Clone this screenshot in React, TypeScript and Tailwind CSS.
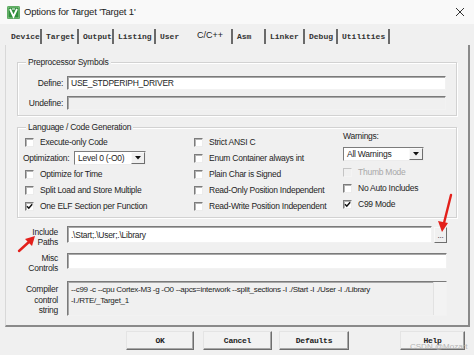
import React from 'react';

const TABS = [
  { t: 'Device', w: 35 },
  { t: 'Target', w: 37 },
  { t: 'Output', w: 35 },
  { t: 'Listing', w: 42 },
  { t: 'User', w: 32, noSep: true },
  { t: 'C/C++', w: 45, sel: true },
  { t: 'Asm', w: 33 },
  { t: 'Linker', w: 39 },
  { t: 'Debug', w: 33 },
  { t: 'Utilities', w: 52 },
];

const Check = ({ checked, disabled }: { checked?: boolean; disabled?: boolean }) => (
  <span
    className={
      disabled
        ? 'relative inline-block w-[9px] h-[9px] shrink-0 border border-t-[#c4c4c4] border-l-[#c4c4c4] border-r-[#f4f4f4] border-b-[#f4f4f4] bg-[#f0f0f0]'
        : 'relative inline-block w-[9px] h-[9px] shrink-0 border border-t-[#7c7c7c] border-l-[#7c7c7c] border-r-[#ececec] border-b-[#ececec] bg-white shadow-[inset_1px_1px_0_#b4b4b4]'
    }
  >
    {checked && (
      <svg className="absolute left-0 top-0" width="7" height="7" viewBox="0 0 7 7">
        <path d="M1 3.2 L2.8 5.2 L6.2 1.2" stroke="#111" strokeWidth="1.5" fill="none" />
      </svg>
    )}
  </span>
);

const CheckRow = ({ label, checked, disabled }: { label: string; checked?: boolean; disabled?: boolean }) => (
  <div className="flex items-center h-[16px] pl-[2px] gap-[6px]">
    <Check checked={checked} disabled={disabled} />
    <span className={disabled ? 'text-[#a8a8a8]' : ''}>{label}</span>
  </div>
);

const Select = ({ value, w }: { value: string; w: string }) => (
  <div className={`${w} h-[14px] flex items-stretch bg-white border border-t-[#7c7c7c] border-l-[#7c7c7c] border-r-[#ececec] border-b-[#ececec]`}>
    <span className="flex-1 pl-[3px] leading-[12px]">{value}</span>
    <div className="w-[14px] flex items-center justify-center bg-[#f0f0f0] border border-t-[#fafafa] border-l-[#fafafa] border-r-[#6e6e6e] border-b-[#6e6e6e]">
      <svg width="6" height="4" viewBox="0 0 6 4">
        <path d="M0 0 H6 L3 3.5 Z" fill="#111" />
      </svg>
    </div>
  </div>
);

const inputCls =
  'border border-t-[#7a7a7a] border-l-[#7a7a7a] border-r-[#f2f2f2] border-b-[#f2f2f2] shadow-[inset_1px_1px_0_#a8a8a8]';

const groupCls =
  'relative border border-[#d2d2d2] shadow-[inset_1px_1px_0_#ffffff,1px_1px_0_#ffffff]';

const Button = ({ label, cls }: { label: string; cls: string }) => (
  <div
    className={`${cls} h-[19px] flex items-center justify-center bg-[#f2f2f2] border border-t-[#e4e4e4] border-l-[#e4e4e4] border-r-[#6e6e6e] border-b-[#6e6e6e] shadow-[inset_-1px_-1px_0_#a8a8a8] font-['Liberation_Mono','Courier_New',monospace] font-bold text-[8px] text-[#222]`}
  >
    {label}
  </div>
);

export default function App() {
  return (
    <div className="relative w-[474px] h-[355px] overflow-hidden bg-[#f0f0f0] text-[#1e1e1e] font-['Liberation_Sans',Arial,sans-serif] text-[8.5px] tracking-[-0.25px] leading-[10px]">
      {/* Title bar */}
      <div className="h-[24px] flex items-center bg-[#f9f9f9] pl-[7px] pr-[9px]">
        <svg width="13" height="13" viewBox="0 0 13 13">
          <rect x="0" y="0" width="13" height="13" rx="1.5" fill="#2f8f3c" />
          <rect x="1" y="1" width="11" height="11" fill="none" stroke="#a8d8a0" strokeWidth="0.8" />
          <path d="M3 3 L6.5 10.5 L10 3" stroke="#fff" strokeWidth="1.8" fill="none" />
          <path d="M5 3 H8" stroke="#fff" strokeWidth="1" />
        </svg>
        <span className="ml-[4px] text-[9.5px] tracking-[-0.15px] text-[#222]">Options for Target 'Target 1'</span>
        <svg className="ml-auto" width="10" height="10" viewBox="0 0 10 10">
          <path d="M1 1 L9 9 M9 1 L1 9" stroke="#333" strokeWidth="1" />
        </svg>
      </div>

      {/* Tabs */}
      <div className="h-[21px] pl-[7px] pt-[5px] flex items-start">
        {TABS.map((tab) => (
          <div
            key={tab.t}
            style={{ width: tab.w }}
            className={
              tab.sel
                ? 'h-[15px] pl-[9px] flex items-center border-r-2 border-[#6a6a6a] text-[9px] tracking-[0px] text-[#222]'
                : tab.noSep
                ? "h-[15px] pl-[4px] flex items-center font-['Liberation_Mono','Courier_New',monospace] font-bold text-[8px] tracking-[0px] text-[#333]"
                : "h-[15px] pl-[4px] flex items-center border-r-2 border-[#6a6a6a] font-['Liberation_Mono','Courier_New',monospace] font-bold text-[8px] tracking-[0px] text-[#333]"
            }
          >
            <span className={tab.sel ? '-mt-[3px]' : ''}>{tab.t}</span>
          </div>
        ))}
      </div>

      {/* Tab page */}
      <div className="ml-[5px] w-[465px] h-[282px] border-l border-[#d8d8d8] border-r-2 border-r-[#8a8a8a] border-b-2 border-b-[#8a8a8a] pl-[11px] pr-[11px] pt-[17px]">
        {/* Preprocessor Symbols */}
        <div className={`${groupCls} h-[54px] pt-[13px] pr-[10px]`}>
          <span className="absolute -top-[6px] left-[8px] px-[2px] bg-[#f0f0f0]">Preprocessor Symbols</span>
          <div className="flex items-center gap-[4px] h-[14px]">
            <span className="w-[45px] text-right">Define:</span>
            <div className={`${inputCls} flex-1 h-[14px] bg-white pl-[3px] leading-[12px]`}>USE_STDPERIPH_DRIVER</div>
          </div>
          <div className="flex items-center gap-[4px] h-[14px] mt-[6px]">
            <span className="w-[45px] text-right">Undefine:</span>
            <div className={`${inputCls} flex-1 h-[14px] bg-[#f0f0f0]`} />
          </div>
        </div>

        {/* Language / Code Generation */}
        <div className={`${groupCls} h-[91px] mt-[11px] flex`}>
          <span className="absolute -top-[6px] left-[8px] px-[2px] bg-[#f0f0f0]">Language / Code Generation</span>
          <div className="w-[176px] pl-[5px] pt-[6px] flex flex-col">
            <CheckRow label="Execute-only Code" />
            <div className="flex items-center h-[16px]">
              <span className="w-[51px]">Optimization:</span>
              <Select value="Level 0 (-O0)" w="w-[72px]" />
            </div>
            <CheckRow label="Optimize for Time" />
            <CheckRow label="Split Load and Store Multiple" />
            <CheckRow label="One ELF Section per Function" checked />
          </div>
          <div className="w-[149px] pt-[6px] -ml-[2px] flex flex-col">
            <CheckRow label="Strict ANSI C" />
            <CheckRow label="Enum Container always int" />
            <CheckRow label="Plain Char is Signed" />
            <CheckRow label="Read-Only Position Independent" />
            <CheckRow label="Read-Write Position Independent" />
          </div>
          <div className="flex-1 pt-[3px] flex flex-col">
            <span className="h-[10px] pl-[2px]">Warnings:</span>
            <div className="mt-[6px] mb-[3px] pl-[2px]">
              <Select value="All Warnings" w="w-[81px]" />
            </div>
            <CheckRow label="Thumb Mode" disabled />
            <CheckRow label="No Auto Includes" />
            <CheckRow label="C99 Mode" checked />
          </div>
        </div>

        {/* Include Paths */}
        <div className="flex items-start mt-[8px]">
          <div className="w-[41px] text-right pt-[1px]">
            <div>Include</div>
            <div>Paths</div>
          </div>
          <div className={`${inputCls} ml-[9px] w-[365px] h-[17px] bg-white pl-[3px] pt-[3px]`}>.\Start;.\User;.\Library</div>
          <div className="ml-[2px] mt-[1px] w-[13px] h-[16px] flex items-end justify-center pb-[3px] bg-[#f0f0f0] border border-t-[#f8f8f8] border-l-[#f8f8f8] border-r-[#6e6e6e] border-b-[#6e6e6e] text-[8px] leading-[6px]">
            ...
          </div>
        </div>

        {/* Misc Controls */}
        <div className="flex items-start mt-[6px]">
          <div className="w-[41px] text-right">
            <div>Misc</div>
            <div>Controls</div>
          </div>
          <div className={`${inputCls} ml-[9px] w-[380px] h-[16px] bg-white`} />
        </div>

        {/* Compiler control string */}
        <div className="flex items-start mt-[8px]">
          <div className="w-[41px] text-right pt-[3px] leading-[10.5px]">
            <div>Compiler</div>
            <div>control</div>
            <div>string</div>
          </div>
          <div className={`${inputCls} ml-[9px] w-[380px] h-[35px] bg-[#f0f0f0] flex`}>
            <div className="flex-1 pl-[3px] pt-[2px] text-[8px] tracking-[-0.3px] leading-[11px] whitespace-nowrap overflow-hidden">
              <div>--c99 -c --cpu Cortex-M3 -g -O0 --apcs=interwork --split_sections -I ./Start -I ./User -I ./Library</div>
              <div>-I./RTE/_Target_1</div>
            </div>
            <div className="w-[13px] bg-[#f3f3f3] border-l border-[#e2e2e2]" />
          </div>
        </div>
      </div>

      {/* Buttons */}
      <div className="flex items-start pt-[4px]">
        <Button label="OK" cls="ml-[126px] w-[68px]" />
        <Button label="Cancel" cls="ml-[9px] w-[69px]" />
        <Button label="Defaults" cls="ml-[7px] w-[70px]" />
        <Button label="Help" cls="ml-[51px] w-[65px]" />
      </div>

      {/* watermark */}
      <span className="absolute left-[410px] top-[342px] whitespace-nowrap text-[8px] leading-[10px] tracking-[0px] text-[#b4b4b4]">CSDN @Mozart</span>

      {/* red annotation arrows */}
      <svg className="absolute left-0 top-0 pointer-events-none" width="474" height="355" viewBox="0 0 474 355">
        <path d="M19 251 L30 241" stroke="#e3201b" strokeWidth="2.4" strokeLinecap="round" />
        <path d="M35 236 L25 239 L32 246 Z" fill="#e3201b" />
        <path d="M451 195 L444 223" stroke="#e3201b" strokeWidth="2.4" strokeLinecap="round" />
        <path d="M442 232 L438 221 L448 223 Z" fill="#e3201b" />
      </svg>
    </div>
  );
}
